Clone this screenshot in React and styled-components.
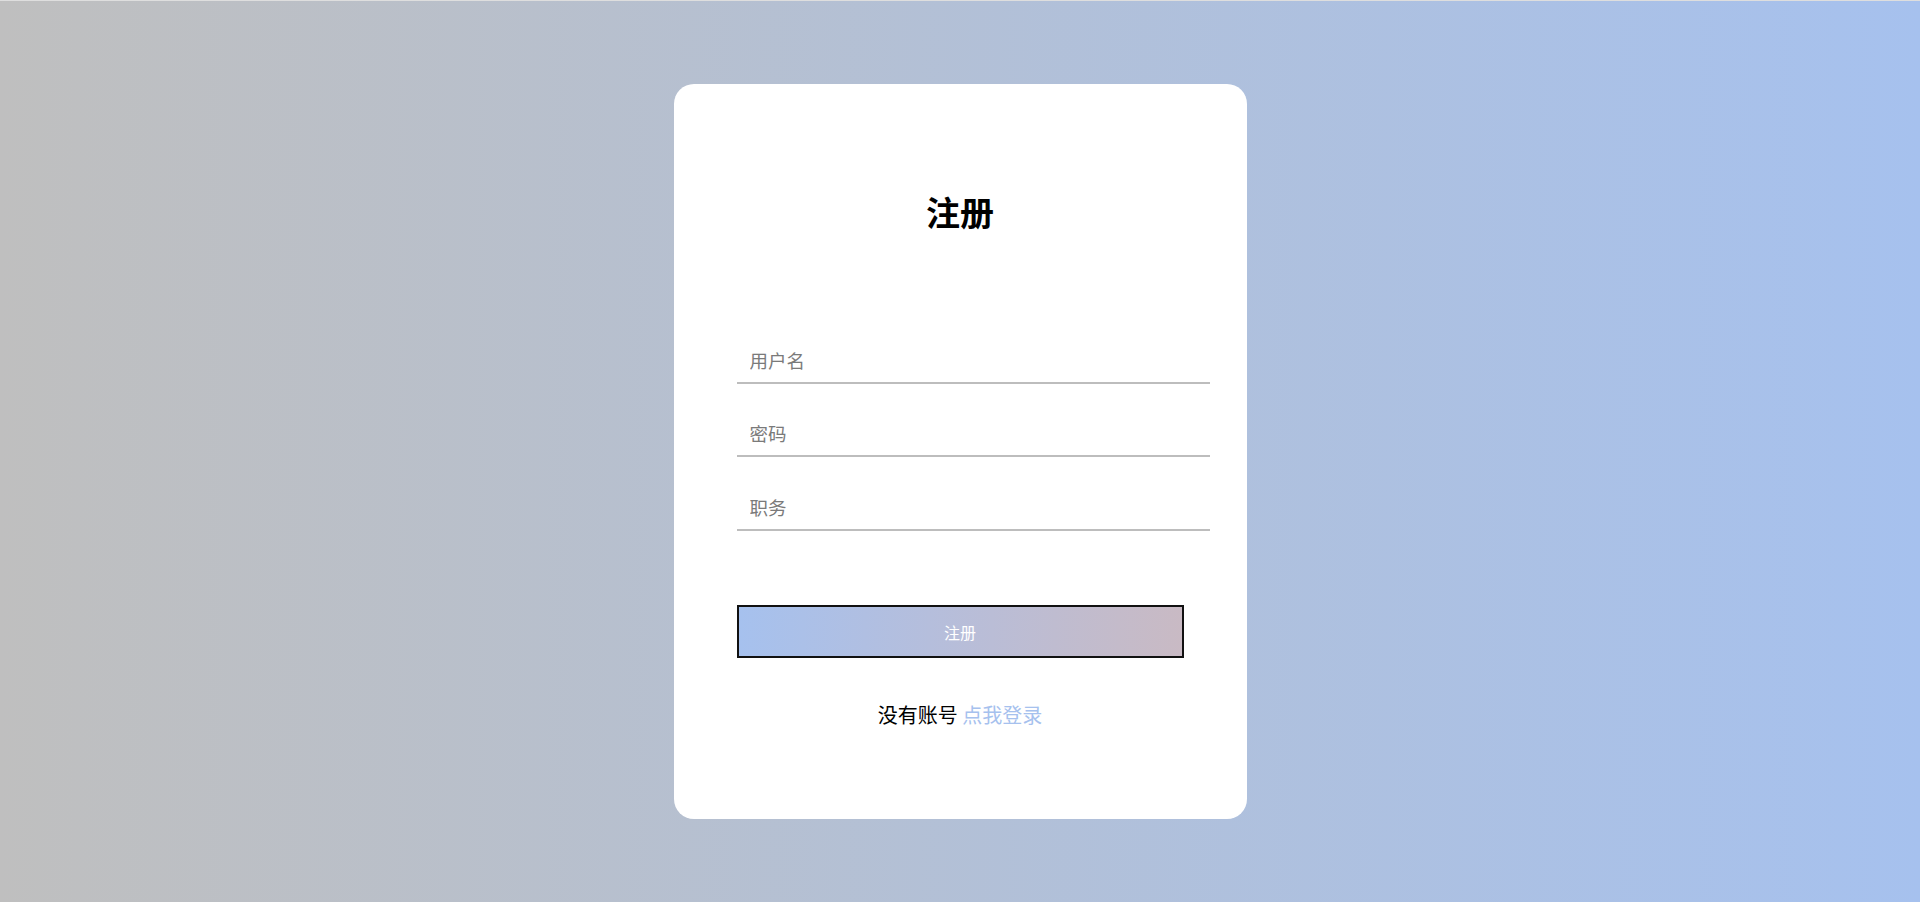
import styled, { createGlobalStyle } from 'styled-components';

const GlobalStyle = createGlobalStyle`
  * {
    box-sizing: border-box;
  }
  body {
    margin: 0;
    font-family: "Noto Sans CJK SC", "Noto Sans", sans-serif;
  }
`;

const Page = styled.div`
  height: 100vh;
  display: flex;
  align-items: center;
  justify-content: center;
  background: linear-gradient(to right, #bfbfbf, #a6c1ee);
  border-top: 1px solid #dedede;
`;

const Card = styled.div`
  width: 573px;
  height: 735px;
  padding: 102px 63px 0;
  background-color: #fff;
  border-radius: 20px;
  display: flex;
  flex-direction: column;
`;

const Title = styled.h1`
  margin: 0;
  font-size: 34px;
  line-height: 51px;
  font-weight: bold;
  text-align: center;
  color: #000;
`;

const Form = styled.div`
  margin-top: 94.5px;
  display: flex;
  flex-direction: column;
  gap: 21.5px;
`;

const Input = styled.input`
  box-sizing: content-box;
  width: 447px;
  height: 44px;
  padding: 6px 13px 0;
  border: none;
  border-bottom: 2px solid #bdbdbd;
  outline: none;
  font-family: inherit;
  font-size: 18.5px;
  color: #333;
  background: transparent;

  &::placeholder {
    color: #7a7a7a;
  }
`;

const SubmitButton = styled.button`
  margin-top: 74.5px;
  width: 447px;
  height: 53px;
  border: 2px solid #111;
  background: linear-gradient(to right, #a6c1ee, #c9bac4);
  color: #fff;
  font-family: inherit;
  font-size: 16px;
  cursor: pointer;
`;

const Footer = styled.p`
  margin: 41.5px 0 0;
  font-size: 20px;
  line-height: 30px;
  text-align: center;
  color: #000;
`;

const Link = styled.a`
  color: #a6c1ee;
  text-decoration: none;
  cursor: pointer;
`;

export default function App() {
  return (
    <>
      <GlobalStyle />
      <Page>
        <Card>
          <Title>注册</Title>
          <Form>
            <Input type="text" placeholder="用户名" />
            <Input type="password" placeholder="密码" />
            <Input type="text" placeholder="职务" />
          </Form>
          <SubmitButton>注册</SubmitButton>
          <Footer>
            没有账号 <Link>点我登录</Link>
          </Footer>
        </Card>
      </Page>
    </>
  );
}
